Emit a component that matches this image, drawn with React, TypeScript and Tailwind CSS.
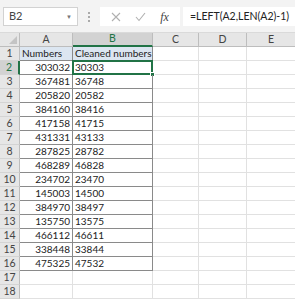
import React from "react";

const rows: [string, string][] = [
  ["303032", "30303"],
  ["367481", "36748"],
  ["205820", "20582"],
  ["384160", "38416"],
  ["417158", "41715"],
  ["431331", "43133"],
  ["287825", "28782"],
  ["468289", "46828"],
  ["234702", "23470"],
  ["145003", "14500"],
  ["384970", "38497"],
  ["135750", "13575"],
  ["466112", "46611"],
  ["338448", "33844"],
  ["475325", "47532"],
];

const font = { fontFamily: "Lato, 'Open Sans', sans-serif" };

function RowHeader({ n, active }: { n: number; active?: boolean }) {
  return (
    <div
      className={
        "w-[20px] h-[14px] shrink-0 flex items-center justify-center text-[10.5px] border-b border-[#d4d4d4] " +
        (active
          ? "bg-[#d2d2d2] text-[#217346] border-r-2 border-r-[#217346]"
          : "bg-[#e6e6e6] text-[#444] border-r border-r-[#bdbdbd]")
      }
    >
      {n}
    </div>
  );
}

export default function App() {
  return (
    <div className="w-[295px] h-[300px] overflow-hidden bg-white text-[#222] whitespace-nowrap" style={font}>
      {/* formula bar */}
      <div className="h-[33px] bg-[#f3f3f3] flex items-center pt-[1px] border-b border-[#dadada]">
        <div className="ml-[3px] w-[75px] h-[19px] bg-white border border-[#d2d2d2] flex items-center justify-between px-[5px] text-[11px] text-[#444]">
          <span>B2</span>
          <span className="text-[6px] text-[#777]">▼</span>
        </div>
        <div className="w-[22px] flex flex-col items-center gap-[2px]">
          <span className="w-[2px] h-[2px] bg-[#aaa]" />
          <span className="w-[2px] h-[2px] bg-[#aaa]" />
          <span className="w-[2px] h-[2px] bg-[#aaa]" />
        </div>
        <div className="w-[80px] h-[19px] bg-white flex items-center justify-around px-[4px] text-[#b5b5b5]">
          <svg width="10" height="10" viewBox="0 0 10 10">
            <path d="M1 1L9 9M9 1L1 9" stroke="#b0b0b0" strokeWidth="1.1" />
          </svg>
          <svg width="11" height="10" viewBox="0 0 11 10">
            <path d="M1 5L4 8.5L10 1" stroke="#b0b0b0" strokeWidth="1.1" fill="none" />
          </svg>
          <span className="text-[12px] italic text-[#444]" style={{ fontFamily: "'Liberation Serif', serif" }}>
            fx
          </span>
        </div>
        <div className="ml-[3px] flex-1 h-[19px] bg-white flex items-center pl-[7px] text-[10.5px] text-[#222]">
          =LEFT(A2,LEN(A2)-1)
        </div>
      </div>

      {/* column headers */}
      <div className="flex h-[14px]">
        <div className="w-[20px] shrink-0 bg-[#e6e6e6] border-r border-b border-[#bdbdbd] relative overflow-hidden">
          <svg className="absolute right-[2px] bottom-[2px]" width="8" height="8" viewBox="0 0 8 8">
            <path d="M8 0L8 8L0 8Z" fill="#c4c4c4" />
          </svg>
        </div>
        <div className="w-[53px] shrink-0 bg-[#e6e6e6] border-r border-b border-[#bdbdbd] flex items-center justify-center text-[10.5px] text-[#444]">A</div>
        <div className="w-[80px] shrink-0 bg-[#d2d2d2] border-r border-[#bdbdbd] border-b-2 border-b-[#217346] flex items-center justify-center text-[10.5px] text-[#217346]">B</div>
        <div className="w-[46px] shrink-0 bg-[#e6e6e6] border-r border-b border-[#bdbdbd] flex items-center justify-center text-[10.5px] text-[#444]">C</div>
        <div className="w-[48px] shrink-0 bg-[#e6e6e6] border-r border-b border-[#bdbdbd] flex items-center justify-center text-[10.5px] text-[#444]">D</div>
        <div className="w-[48px] shrink-0 bg-[#e6e6e6] border-b border-[#bdbdbd] flex items-center justify-center text-[10.5px] text-[#444]">E</div>
      </div>

      {/* row 1 */}
      <div className="flex">
        <RowHeader n={1} />
        <div className="w-[53px] h-[14px] shrink-0 bg-[#dce6f1] border-r border-b border-[#8a8a8a] flex items-center pl-[2px] text-[10px]">Numbers</div>
        <div className="w-[80px] h-[14px] shrink-0 bg-[#dce6f1] border-r border-b border-[#8a8a8a] flex items-center pl-[2px] text-[10px]">Cleaned numbers</div>
        <div className="w-[46px] h-[14px] shrink-0 border-r border-b border-[#e1e1e1]" />
        <div className="w-[48px] h-[14px] shrink-0 border-r border-b border-[#e1e1e1]" />
        <div className="w-[48px] h-[14px] shrink-0 border-b border-[#e1e1e1]" />
      </div>

      {rows.map(([a, b], i) => (
        <div className="flex" key={i}>
          <RowHeader n={i + 2} active={i === 0} />
          <div className="w-[53px] h-[14px] shrink-0 border-r border-b border-[#8a8a8a] flex items-center justify-end pr-[2px] text-[10px]">{a}</div>
          <div className="relative w-[80px] h-[14px] shrink-0 border-r border-b border-[#8a8a8a] flex items-center pl-[2px] text-[10px]">
            {b}
            {i === 0 && (
              <>
                <div className="absolute -left-[1px] -top-[1px] w-[81px] h-[15px] border-2 border-[#217346]" />
                <div className="absolute -right-[3px] -bottom-[3px] w-[5px] h-[5px] bg-[#217346] border border-white" />
              </>
            )}
          </div>
          <div className="w-[46px] h-[14px] shrink-0 border-r border-b border-[#e1e1e1]" />
          <div className="w-[48px] h-[14px] shrink-0 border-r border-b border-[#e1e1e1]" />
          <div className="w-[48px] h-[14px] shrink-0 border-b border-[#e1e1e1]" />
        </div>
      ))}

      {[17, 18].map((n) => (
        <div className="flex" key={n}>
          <RowHeader n={n} />
          <div className="w-[53px] h-[14px] shrink-0 border-r border-b border-[#e1e1e1]" />
          <div className="w-[80px] h-[14px] shrink-0 border-r border-b border-[#e1e1e1]" />
          <div className="w-[46px] h-[14px] shrink-0 border-r border-b border-[#e1e1e1]" />
          <div className="w-[48px] h-[14px] shrink-0 border-r border-b border-[#e1e1e1]" />
          <div className="w-[48px] h-[14px] shrink-0 border-b border-[#e1e1e1]" />
        </div>
      ))}
    </div>
  );
}
